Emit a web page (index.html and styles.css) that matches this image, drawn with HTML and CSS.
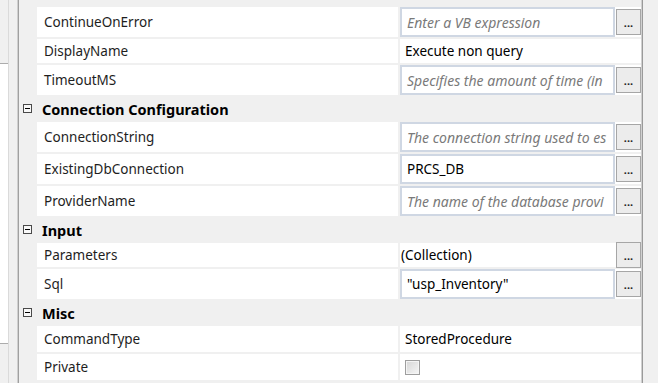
FILE: index.html
```html
<!DOCTYPE html>
<html lang="en">
<head>
    <meta charset="UTF-8">
    <meta name="viewport" content="width=device-width, initial-scale=1.0">
    <title>Properties</title>
    <link rel="stylesheet" href="styles.css">
</head>
<body>
    <div class="window">
        <div class="side"><div class="side-box"></div></div>
        <div class="splitter"></div>

        <div class="grid">
            <div class="group">
                <div class="row tall">
                    <div class="name">ContinueOnError</div>
                    <div class="value">
                        <div class="editor hint"><span>Enter a VB expression</span></div>
                        <div class="dots">...</div>
                    </div>
                </div>
                <div class="row">
                    <div class="name">DisplayName</div>
                    <div class="value text">Execute non query</div>
                </div>
                <div class="row tall">
                    <div class="name">TimeoutMS</div>
                    <div class="value">
                        <div class="editor hint"><span>Specifies the amount of time (in</span></div>
                        <div class="dots">...</div>
                    </div>
                </div>
            </div>

            <div class="category"><span class="toggle"></span>Connection Configuration</div>
            <div class="group">
                <div class="row tall">
                    <div class="name">ConnectionString</div>
                    <div class="value">
                        <div class="editor hint"><span>The connection string used to es</span></div>
                        <div class="dots">...</div>
                    </div>
                </div>
                <div class="row tall">
                    <div class="name">ExistingDbConnection</div>
                    <div class="value">
                        <div class="editor"><span>PRCS_DB</span></div>
                        <div class="dots">...</div>
                    </div>
                </div>
                <div class="row tall">
                    <div class="name">ProviderName</div>
                    <div class="value">
                        <div class="editor hint"><span>The name of the database provi</span></div>
                        <div class="dots">...</div>
                    </div>
                </div>
            </div>

            <div class="category"><span class="toggle"></span>Input</div>
            <div class="group">
                <div class="row">
                    <div class="name">Parameters</div>
                    <div class="value">
                        <div class="plain">(Collection)</div>
                        <div class="dots">...</div>
                    </div>
                </div>
                <div class="row tall">
                    <div class="name">Sql</div>
                    <div class="value">
                        <div class="editor"><span>"usp_Inventory"</span></div>
                        <div class="dots">...</div>
                    </div>
                </div>
            </div>

            <div class="category"><span class="toggle"></span>Misc</div>
            <div class="group">
                <div class="row mid">
                    <div class="name">CommandType</div>
                    <div class="value text">StoredProcedure</div>
                </div>
                <div class="row mid">
                    <div class="name">Private</div>
                    <div class="value text"><span class="check"></span></div>
                </div>
            </div>
        </div>

        <div class="edge"></div>
    </div>
</body>
</html>
```

FILE: styles.css
```css
body {
    margin: 0;
    background: #f0f0f0;
    font-family: "Noto Sans", "Open Sans", sans-serif;
    font-size: 13.5px;
    color: #1e1e1e;
}
.window {
    display: flex;
    width: 658px;
    height: 383px;
    overflow: hidden;
}

/* left dock + splitter */
.side {
    width: 8px;
    border-right: 1px solid #dadada;
}
.side-box {
    margin-top: 63px;
    height: 279px;
    background: #fff;
    border-top: 1px solid #acacac;
    border-bottom: 1px solid #acacac;
}
.splitter {
    width: 1px;
    margin-left: 8px;
    border-left: 1px solid #cfcfcf;
    background: #a0a0a0;
}
.edge {
    width: 1px;
    border-left: 1px solid #d0d0d0;
    background: #9a9a9a;
}

/* property grid */
.grid {
    width: 622px;
    padding-top: 7px;
    display: flex;
    flex-direction: column;
}
.group {
    display: flex;
    flex-direction: column;
    gap: 2px;
    padding-left: 18px;
}
.row {
    display: flex;
    height: 24px;
    gap: 2px;
}
.row.tall {
    height: 30px;
}
.row.mid {
    height: 26px;
}
.name {
    width: 354px;
    padding-left: 7px;
    background: #fff;
    display: flex;
    align-items: center;
}
.value {
    width: 241px;
    background: #fff;
    display: flex;
    align-items: center;
    color: #000;
}
.value.text {
    padding-left: 5px;
    width: 236px;
}
.plain {
    flex: 1;
    padding-left: 1px;
}
.editor {
    box-sizing: border-box;
    width: 215px;
    height: 100%;
    border: 2px solid #cfd7e3;
    padding-left: 5px;
    display: flex;
    align-items: center;
    white-space: nowrap;
    overflow: hidden;
}
.editor.hint {
    font-style: italic;
    font-size: 14px;
    color: #7a7a7a;
}
.dots {
    box-sizing: border-box;
    width: 25px;
    height: 26px;
    margin-left: 1px;
    border: 1px solid #a6a6a6;
    background: #ececec;
    font-size: 11px;
    font-weight: bold;
    line-height: 10px;
    display: flex;
    align-items: flex-end;
    justify-content: center;
    padding-bottom: 6px;
    color: #222;
}
.check {
    box-sizing: border-box;
    width: 15px;
    height: 15px;
    border: 1px solid #9e9e9e;
    background: linear-gradient(135deg, #d6d6d6, #f6f6f6);
    box-shadow: inset 0 0 0 1px #f4f4f4;
}

.category {
    height: 27px;
    padding-left: 4px;
    display: flex;
    align-items: center;
    font-size: 14.5px;
    font-weight: bold;
    color: #000;
}
.toggle {
    box-sizing: border-box;
    position: relative;
    width: 9px;
    height: 9px;
    margin-right: 10px;
    border: 1px solid #4a4a4a;
    background: #f8f8f8;
}
.toggle::after {
    content: "";
    position: absolute;
    left: 1px;
    top: 3px;
    width: 5px;
    height: 1px;
    background: #000;
}
```
